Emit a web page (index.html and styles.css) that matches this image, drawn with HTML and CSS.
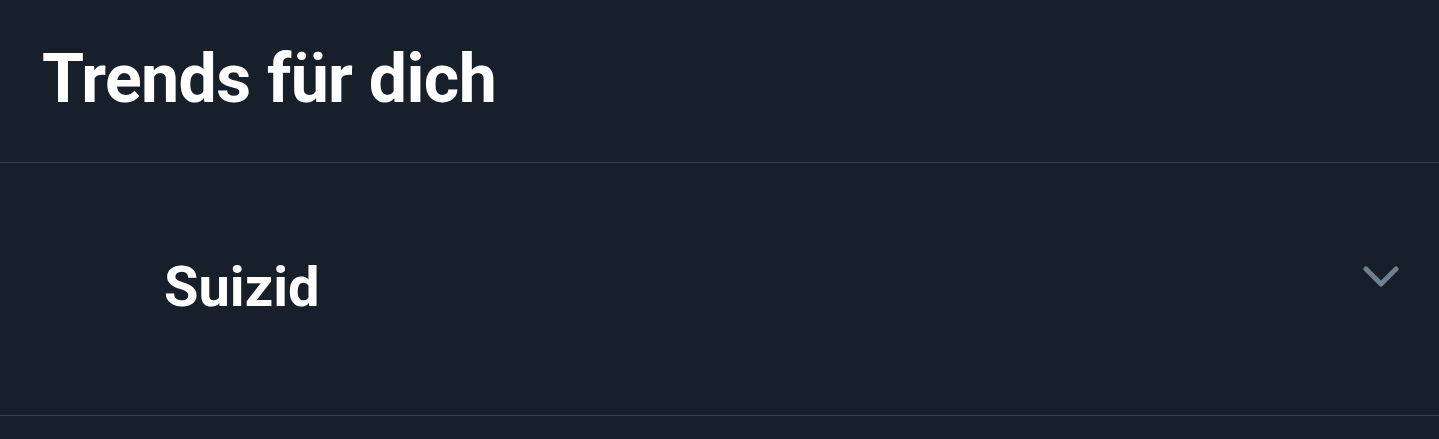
FILE: index.html
```html
<!DOCTYPE html>
<html lang="de">
<head>
<meta charset="utf-8">
<link rel="stylesheet" href="styles.css">
</head>
<body>
<div class="panel">
  <div class="header"><h2 class="title">Trends für dich</h2></div>
  <div class="trend">
    <span class="trend-name">Suizid</span>
    <svg class="chevron" viewBox="0 0 36 22" width="36" height="22"><path d="M3 3 L18 18 L33 3" fill="none" stroke="#6e7f8f" stroke-width="5" stroke-linecap="round" stroke-linejoin="round"/></svg>
  </div>
</div>
</body>
</html>
```
FILE: styles.css
```css
html, body {
  margin: 0;
  padding: 0;
  background: #17202a;
}
.panel {
  font-family: Roboto, "Liberation Sans", sans-serif;
  color: #ffffff;
}
.header {
  border-bottom: 1px solid #38444d;
  display: flex;
  align-items: center;
  padding-left: 42px;
  box-sizing: border-box;
  height: 163px;
}
.title {
  margin: 0;
  font-size: 68px;
  font-weight: 700;
  line-height: 1;
  letter-spacing: -0.6px;
  padding-bottom: 4px;
}
.trend {
  height: 253px;
  box-sizing: border-box;
  border-bottom: 1px solid #38444d;
  display: flex;
  align-items: center;
  justify-content: space-between;
  padding-left: 164px;
  padding-right: 40px;
}
.trend-name {
  font-size: 56px;
  font-weight: 700;
  line-height: 1;
  padding-bottom: 4px;
}
.chevron {
  display: block;
  margin-top: -24px;
}
```
